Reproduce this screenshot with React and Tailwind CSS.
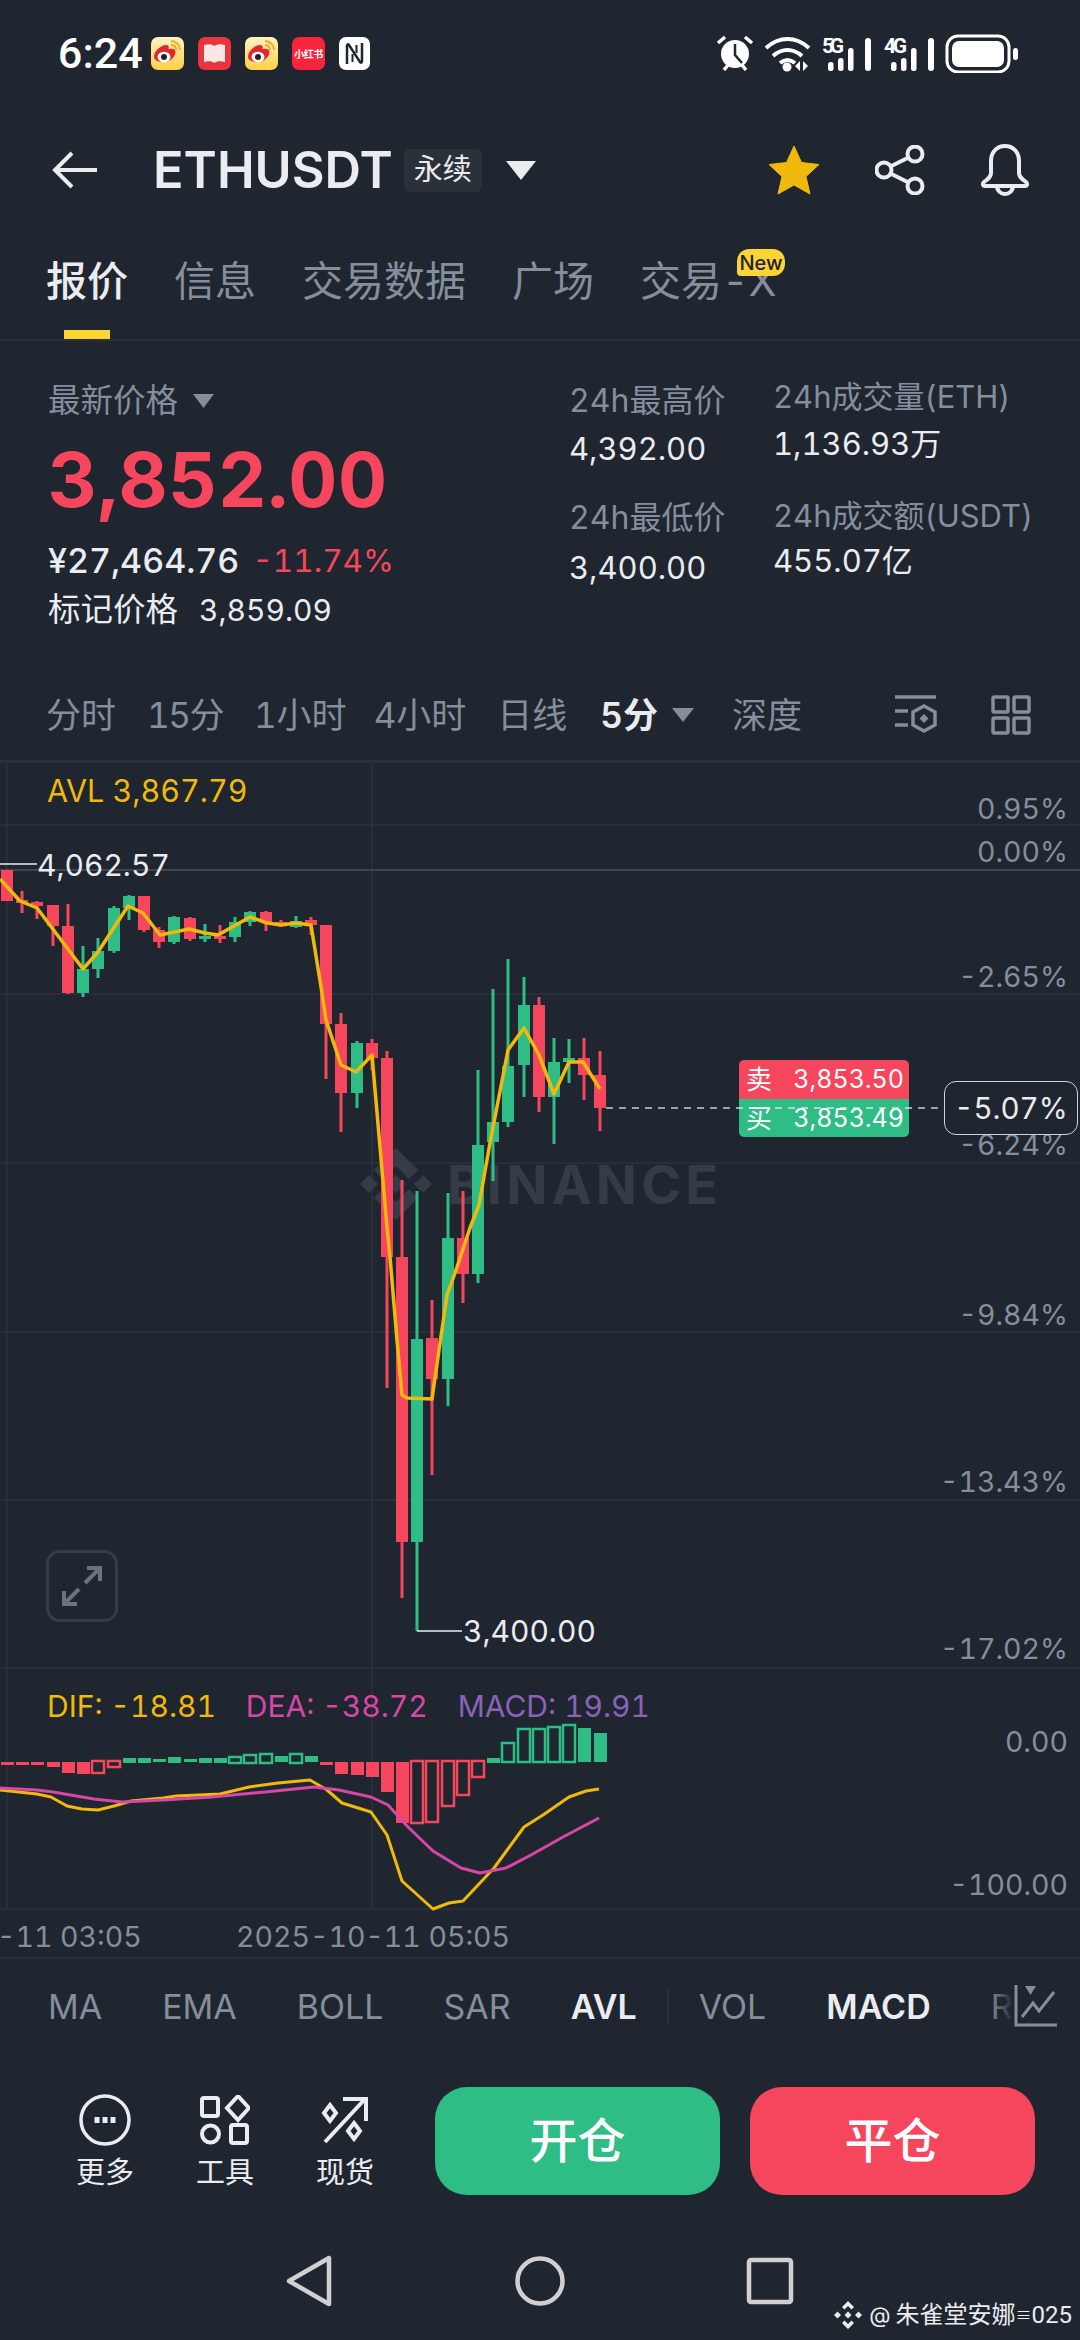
import React from "react";

const RED = "#f6465d";
const GREEN = "#2ebd85";

// x, high, body top, body bottom, low, up?
const candles = [
  [7, 870, 870, 901, 901, 0],
  [22, 891, 900, 903, 913, 0],
  [37, 901, 902, 906, 919, 0],
  [53, 905, 905, 926, 946, 0],
  [68, 904, 926, 993, 994, 0],
  [83, 946, 969, 993, 997, 1],
  [98, 938, 951, 969, 978, 1],
  [114, 906, 908, 951, 953, 1],
  [129, 895, 896, 908, 920, 1],
  [144, 896, 896, 930, 932, 0],
  [159, 927, 930, 942, 948, 0],
  [174, 916, 917, 942, 944, 1],
  [190, 917, 918, 939, 941, 0],
  [205, 924, 936, 939, 942, 1],
  [220, 925, 936, 939, 943, 0],
  [235, 917, 922, 937, 942, 1],
  [250, 911, 912, 922, 926, 1],
  [266, 911, 912, 922, 931, 0],
  [281, 920, 922, 926, 927, 0],
  [296, 916, 921, 927, 928, 1],
  [311, 917, 920, 925, 935, 0],
  [326, 925, 925, 1024, 1079, 0],
  [341, 1013, 1024, 1093, 1132, 0],
  [357, 1041, 1043, 1093, 1108, 1],
  [372, 1039, 1043, 1058, 1070, 0],
  [387, 1051, 1058, 1257, 1388, 0],
  [402, 1180, 1257, 1542, 1598, 0],
  [417, 1191, 1339, 1542, 1631, 1],
  [432, 1300, 1338, 1379, 1475, 0],
  [448, 1193, 1238, 1379, 1406, 1],
  [463, 1191, 1238, 1274, 1303, 0],
  [478, 1070, 1145, 1274, 1283, 1],
  [493, 989, 1122, 1142, 1181, 1],
  [508, 959, 1066, 1122, 1127, 1],
  [524, 977, 1005, 1065, 1097, 1],
  [539, 997, 1005, 1097, 1112, 0],
  [554, 1038, 1062, 1097, 1144, 1],
  [569, 1039, 1058, 1062, 1083, 1],
  [584, 1038, 1058, 1075, 1100, 0],
  [600, 1051, 1075, 1108, 1131, 0],
];

// x, top, bottom, up?, hollow?
const bars = [
  [7, 1762, 1765, 0, 0], [22, 1762, 1765, 0, 0], [37, 1762, 1765, 0, 0], [53, 1762, 1767, 0, 0],
  [68, 1762, 1773, 0, 0], [83, 1762, 1774, 0, 0], [98, 1761, 1773, 0, 1], [114, 1761, 1767, 0, 1],
  [129, 1758, 1763, 1, 0], [144, 1758, 1763, 1, 0], [159, 1759, 1762, 1, 0], [174, 1757, 1763, 1, 0],
  [190, 1759, 1762, 1, 0], [205, 1758, 1763, 1, 0], [220, 1758, 1763, 1, 0], [235, 1757, 1763, 1, 1],
  [250, 1755, 1763, 1, 1], [266, 1754, 1763, 1, 1], [281, 1756, 1762, 1, 0], [296, 1754, 1763, 1, 1],
  [311, 1756, 1762, 1, 0], [326, 1762, 1765, 0, 0], [341, 1762, 1774, 0, 0], [357, 1762, 1775, 0, 0],
  [372, 1762, 1777, 0, 0], [387, 1762, 1792, 0, 0], [402, 1762, 1823, 0, 0], [417, 1761, 1823, 0, 1],
  [432, 1761, 1822, 0, 1], [448, 1761, 1806, 0, 1], [463, 1761, 1795, 0, 1], [478, 1761, 1777, 0, 1],
  [493, 1758, 1763, 1, 0], [508, 1743, 1762, 1, 1], [524, 1729, 1762, 1, 1], [539, 1729, 1762, 1, 1],
  [554, 1727, 1762, 1, 1], [569, 1725, 1762, 1, 1], [584, 1728, 1762, 1, 0], [600, 1733, 1762, 1, 0],
];

const avl =
  "0,879 20,901 37,908 83,969 98,952 128,906 143,913 160,935 189,929 205,933 218,935 250,917 267,923 281,925 296,923 311,925 322,993 326,1020 341,1065 356,1072 372,1055 380,1147 387,1227 390,1257 397,1340 402,1395 407,1398 432,1399 438,1357 447,1295 455,1273 470,1228 479,1205 490,1143 508,1050 524,1028 539,1055 554,1094 569,1062 583,1062 600,1089";
const dif =
  "0,1790 37,1794 51,1797 67,1806 82,1809 98,1810 114,1806 131,1801 163,1798 176,1796 220,1794 249,1787 278,1783 310,1780 327,1790 342,1803 371,1812 387,1835 402,1881 433,1909 449,1903 463,1901 494,1868 524,1827 543,1815 569,1797 586,1791 599,1789";
const dea =
  "0,1788 37,1790 53,1792 94,1799 122,1802 163,1800 212,1797 265,1792 314,1787 339,1790 371,1797 388,1805 408,1827 433,1851 461,1868 480,1873 506,1868 531,1855 563,1837 599,1818";

function WeiboIcon() {
  return (
    <svg width="33" height="33" viewBox="0 0 33 33">
      <defs>
        <linearGradient id="wb" x1="0" y1="0" x2="0" y2="1">
          <stop offset="0" stopColor="#fff3c4" />
          <stop offset="1" stopColor="#fdd043" />
        </linearGradient>
      </defs>
      <rect width="33" height="33" rx="7" fill="url(#wb)" />
      <path d="M3 20c0-6 7-12 12-12 3 0 3 2 2.500 4 4-1 7 0 7 3 0 5-6 10-12 10-5 0-9.500-2-9.500-5z" fill="#e6262e" />
      <ellipse cx="13" cy="20" rx="6.500" ry="5.200" fill="#fff" />
      <circle cx="13" cy="20" r="3" fill="#222" />
      <path d="M20 4c5 0 9 4 9 9M20 8c3 0 5 2 5 5" stroke="#f5a623" strokeWidth="2" fill="none" />
    </svg>
  );
}

function StatusBar() {
  return (
    <div className="flex h-[106px] items-center pl-[58px] pr-[62px]">
      <span className="w-[93px] font-['Roboto',sans-serif] text-[43px] leading-none font-medium text-white">6:24</span>
      <div className="flex items-center gap-[14px]">
        <WeiboIcon />
        <svg width="33" height="33" viewBox="0 0 33 33">
          <rect width="33" height="33" rx="7" fill="#e8343c" />
          <path d="M6 8c4-1 8-1 10.500 1 2.500-2 6.500-2 10.500-1v17c-4-1-8-1-10.500 1-2.500-2-6.500-2-10.500-1z" fill="#fde6e6" />
        </svg>
        <WeiboIcon />
        <div className="flex h-[33px] w-[33px] items-center justify-center rounded-[7px] bg-[#f8233c] font-['Noto_Sans_CJK_SC',sans-serif] text-[10px] font-bold tracking-[-0.5px] whitespace-nowrap text-white">
          小红书
        </div>
        <svg width="31" height="33" viewBox="0 0 31 33">
          <rect width="31" height="33" rx="7" fill="#fff" />
          <path d="M8 27V9c0-2 1-2 2-1l11 17c1 1 2 1 2-1V6" stroke="#1f2630" strokeWidth="2.500" fill="none" />
          <path d="M13.500 25V17M17.500 8v8" stroke="#1f2630" strokeWidth="2" fill="none" />
        </svg>
      </div>
      <div className="ml-auto flex items-center">
        <svg width="302" height="40" viewBox="716 33 302 40">
          <circle cx="735" cy="54" r="14" fill="#fff" />
          <path d="M735 44v11l7 8" stroke="#1f2630" strokeWidth="2.500" fill="none" />
          <path d="M718 43l7-6M752 43l-7-6M724 70l4-5M746 70l-4-5" stroke="#fff" strokeWidth="3.500" fill="none" />
          <path d="M766 48c13-12 30-12 43 0M773 56c9-8 20-8 29 0M780 63c5-4 10-4 15 0" stroke="#fff" strokeWidth="4" fill="none" />
          <circle cx="787" cy="67" r="4.500" fill="#fff" />
          <path d="M800 61v10l-5-5zM803 61v10l5-5z" fill="#fff" />
          <text x="822" y="53" fill="#fff" fontSize="21" fontWeight="700" fontFamily="Roboto, sans-serif" textLength="22">5G</text>
          <text x="884" y="53" fill="#fff" fontSize="21" fontWeight="700" fontFamily="Roboto, sans-serif" textLength="23">4G</text>
          {[
            [828, 838, 848, 865],
            [891, 901, 911, 928],
          ].map(([a, b, c, d]) => (
            <g key={a} fill="#fff">
              <rect x={a} y="62" width="5.500" height="9" rx="2.500" />
              <rect x={b} y="58" width="5.500" height="13" rx="2.500" />
              <rect x={c} y="48" width="5.500" height="23" rx="2.500" />
              <rect x={d} y="38" width="6" height="33" rx="3" />
            </g>
          ))}
          <rect x="947" y="36" width="62" height="36" rx="11" fill="none" stroke="#fff" strokeWidth="3" />
          <rect x="952" y="41" width="52" height="26" rx="7" fill="#fff" />
          <rect x="1013" y="48" width="5" height="12" rx="2.500" fill="#fff" />
        </svg>
      </div>
    </div>
  );
}

function Header() {
  return (
    <div className="flex h-[128px] items-center pr-[50px] pl-[52px]">
      <svg width="46" height="38" viewBox="0 0 46 38" fill="none" stroke="#eaecef" strokeWidth="4">
        <path d="M45 19H4M20 2L3 19l17 17" />
      </svg>
      <span className="ml-[55px] text-[50.500px] leading-none font-semibold text-[#eaecef]">ETHUSDT</span>
      <span className="ml-[11px] flex h-[43px] w-[78px] items-center justify-center rounded-[6px] bg-[#2b3139] text-[29px] text-[#eaecef]">永续</span>
      <svg className="ml-[24px]" width="30" height="19" viewBox="0 0 30 19">
        <path d="M0 0h30L15 19z" fill="#eaecef" />
      </svg>
      <svg className="ml-auto" width="52" height="50" viewBox="0 0 52 50">
        <path d="M26 1l7.500 16.500 17.500 2-13 12 4 17.500-16-9-16 9 4-17.500-13-12 17.500-2z" fill="#f0b90b" stroke="#f0b90b" strokeWidth="1" strokeLinejoin="round" />
      </svg>
      <svg className="ml-[55px]" width="50" height="50" viewBox="0 0 50 50" fill="none" stroke="#eaecef" strokeWidth="4">
        <circle cx="40" cy="9" r="7.500" />
        <circle cx="40" cy="41" r="7.500" />
        <circle cx="9" cy="25" r="7.500" />
        <path d="M15.500 21.500L33.500 12.500M15.500 28.500L33.500 37.500" />
      </svg>
      <svg className="ml-[55px]" width="50" height="52" viewBox="0 0 50 52" fill="none" stroke="#eaecef" strokeWidth="4">
        <path d="M25 2c-9 0-14 7-14 15v12c0 4-3 6-7 9-2 2-1 4 1 4h40c2 0 3-2 1-4-4-3-7-5-7-9V17c0-8-5-15-14-15z" />
        <path d="M17 42c0 5 4 8 8 8s8-3 8-8" />
      </svg>
    </div>
  );
}

function Tabs() {
  return (
    <div className="relative flex h-[107px] gap-[46px] border-b-2 border-[#2b3139] pt-[26px] pl-[46px] text-[41px] leading-[42px] text-[#848e9c]">
      <span className="font-medium text-[#eaecef]">报价</span>
      <span>信息</span>
      <span>交易数据</span>
      <span>广场</span>
      <span>交易-X</span>
      <span className="absolute top-[15px] left-[737px] flex h-[27px] w-[48px] items-center justify-center rounded-[12px] rounded-bl-[4px] bg-[#fcd535] text-[20px] font-medium text-[#1e2329]">New</span>
      <span className="absolute top-[96px] left-[64px] h-[9px] w-[46px] bg-[#fcd535]" />
    </div>
  );
}

function Stats() {
  return (
    <div className="flex h-[335px]">
      <div className="w-[569px] pt-[40px] pl-[48px]">
        <div className="flex h-[40px] items-center text-[32.500px] text-[#848e9c]">
          最新价格
          <svg className="ml-[15px]" width="21" height="14" viewBox="0 0 21 14">
            <path d="M0 0h21L10.500 14z" fill="#848e9c" />
          </svg>
        </div>
        <div className="mt-[18px] h-[80px] text-[76px] leading-[80px] font-bold tracking-[0.5px] text-[#f6465d]">3,852.00</div>
        <div className="mt-[22px] flex h-[40px] items-center text-[34px] leading-[40px] font-medium whitespace-nowrap text-[#eaecef]">
          ¥27,464.76
          <span className="ml-[13px] text-[31.500px] font-normal text-[#f6465d]">-11.74%</span>
        </div>
        <div className="mt-[9px] flex h-[40px] items-center text-[32.500px] text-[#eaecef]">
          标记价格
          <span className="ml-[21px] text-[30px]">3,859.09</span>
        </div>
      </div>
      <div className="w-[204px] pt-[40px] text-[32px] text-[#848e9c]">
        <div className="h-[40px] leading-[40px] whitespace-nowrap">24h最高价</div>
        <div className="mt-[10px] h-[36px] text-[31px] leading-[36px] text-[#eaecef]">4,392.00</div>
        <div className="mt-[31px] h-[40px] leading-[40px] whitespace-nowrap">24h最低价</div>
        <div className="mt-[12px] h-[36px] text-[31px] leading-[36px] text-[#eaecef]">3,400.00</div>
      </div>
      <div className="pt-[36px] text-[31px] text-[#848e9c]">
        <div className="h-[40px] leading-[40px] whitespace-nowrap">24h成交量(ETH)</div>
        <div className="mt-[9px] h-[36px] text-[31px] leading-[36px] text-[#eaecef]">1,136.93万</div>
        <div className="mt-[34px] h-[40px] leading-[40px] whitespace-nowrap">24h成交额(USDT)</div>
        <div className="mt-[7px] h-[36px] text-[31px] leading-[36px] text-[#eaecef]">455.07亿</div>
      </div>
    </div>
  );
}

function Periods() {
  return (
    <div className="flex h-[84px] items-center gap-[31px] pr-[49px] pb-[6px] pl-[46px] text-[35px] whitespace-nowrap text-[#848e9c]">
      <span>分时</span>
      <span className="tracking-[-1.500px]">15分</span>
      <span>1小时</span>
      <span className="-ml-[4px]">4小时</span>
      <span>日线</span>
      <span className="ml-[2px] flex items-center font-semibold text-[#eaecef]">
        5分
        <svg className="ml-[14px]" width="22" height="14" viewBox="0 0 22 14">
          <path d="M0 0h22L11 14z" fill="#848e9c" />
        </svg>
      </span>
      <span className="ml-[7px]">深度</span>
      <svg className="ml-auto" width="42" height="40" viewBox="0 0 42 40" fill="none" stroke="#848e9c" strokeWidth="3.500">
        <path d="M0 2h41M0 16h13M0 30h13" />
        <path d="M29 11l11 6v13l-11 6-11-6V17z" />
        <path d="M29 19l4.500 4.500-4.500 4.500-4.500-4.500z" fill="#848e9c" stroke="none" />
      </svg>
      <svg className="ml-[23px]" width="40" height="40" viewBox="0 0 40 40" fill="none" stroke="#848e9c" strokeWidth="3.500">
        <rect x="2" y="2" width="15" height="15" rx="1.500" />
        <rect x="23" y="2" width="15" height="15" rx="1.500" />
        <rect x="2" y="23" width="15" height="15" rx="1.500" />
        <rect x="23" y="23" width="15" height="15" rx="1.500" />
      </svg>
    </div>
  );
}

function ChartDrawing() {
  return (
    <svg className="absolute inset-0" width="1080" height="1194" viewBox="0 763 1080 1194">
      <g stroke="#2d333d" strokeWidth="1.500">
        <path d="M7 763V1909M372 763V1909" />
        <path d="M0 825H1080M0 994H1080M0 1163H1080M0 1332H1080M0 1500H1080M0 1668H1080M0 1909H1080" />
      </g>
      <path d="M0 870H1080" stroke="#4b515b" strokeWidth="1.500" />
      <g fill="#363c47">
        <path d="M396 1148l22 22-9 9-13-13-13 13-9-9zM396 1220l22-22-9-9-13 13-13-13-9 9z" />
        <path d="M360 1184l9-9 9 9-9 9zM414 1184l9-9 9 9-9 9zM387 1184l9-9 9 9-9 9z" />
      </g>
      <text x="447" y="1204" fill="#363c47" fontSize="54" fontWeight="700" fontFamily="Inter, sans-serif" textLength="271">BINANCE</text>
      {candles.map(([x, h, t, b, l, up]) => (
        <g key={x} fill={up ? GREEN : RED}>
          <rect x={x - 1.5} y={h} width="3" height={l - h} />
          <rect x={x - 6} y={t} width="12" height={b - t} />
        </g>
      ))}
      <polyline points={avl} fill="none" stroke="#f0b90b" strokeWidth="3.500" strokeLinejoin="round" />
      <path d="M0 864H37M417 1631H462" stroke="#eaecef" strokeWidth="1.500" fill="none" />
      {bars.map(([x, t, b, up, hollow]) =>
        hollow ? (
          <rect key={x} x={x - 6} y={t} width="12" height={b - t} fill="none" stroke={up ? GREEN : RED} strokeWidth="2.500" />
        ) : (
          <rect key={x} x={x - 6} y={t} width="13" height={b - t} fill={up ? GREEN : RED} />
        ),
      )}
      <polyline points={dif} fill="none" stroke="#f0b90b" strokeWidth="3" strokeLinejoin="round" />
      <polyline points={dea} fill="none" stroke="#d846a6" strokeWidth="3" strokeLinejoin="round" />
    </svg>
  );
}

function Chart() {
  return (
    <div className="relative h-[1194px] bg-[#1f2630] text-[28.500px] leading-[36px]">
      <ChartDrawing />
      <span className="absolute top-[10px] left-[47px] text-[30.500px] text-[#f0b90b]">AVL 3,867.79</span>
      <span className="absolute top-[84px] left-[37px] text-[30px] text-[#eaecef]">4,062.57</span>
      <span className="absolute top-[850px] left-[463px] text-[30px] text-[#eaecef]">3,400.00</span>

      <span className="absolute top-[28px] right-[12px] text-[#848e9c]">0.95%</span>
      <span className="absolute top-[71px] right-[12px] text-[#848e9c]">0.00%</span>
      <span className="absolute top-[196px] right-[12px] text-[#848e9c]">-2.65%</span>
      <span className="absolute top-[364px] right-[12px] text-[#848e9c]">-6.24%</span>
      <span className="absolute top-[534px] right-[12px] text-[#848e9c]">-9.84%</span>
      <span className="absolute top-[701px] right-[12px] text-[#848e9c]">-13.43%</span>
      <span className="absolute top-[868px] right-[12px] text-[#848e9c]">-17.02%</span>
      <span className="absolute top-[961px] right-[12px] text-[#848e9c]">0.00</span>
      <span className="absolute top-[1104px] right-[12px] text-[#848e9c]">-100.00</span>

      <div className="absolute top-[318px] left-[944px] flex h-[54px] w-[134px] items-center justify-center rounded-[12px] border-[1.5px] border-[#cfd2d6] bg-[#1f2630] text-[29.500px] text-[#eaecef]">-5.07%</div>

      <div className="absolute top-[297px] left-[739px] w-[170px] overflow-hidden rounded-[5px] text-[26px] leading-[39px] text-white">
        <div className="flex h-[39px] justify-between bg-[#f6465d] pr-[5px] pl-[7px]">
          <span>卖</span>
          <span className="text-[25px]">3,853.50</span>
        </div>
        <div className="flex h-[38px] justify-between bg-[#2ebd85] pr-[5px] pl-[7px]">
          <span>买</span>
          <span className="text-[25px]">3,853.49</span>
        </div>
      </div>
      <svg className="absolute top-[344px] left-[606px]" width="338" height="2" viewBox="0 0 338 2">
        <path d="M0 1H338" stroke="#eaecef" strokeWidth="1.500" strokeDasharray="7 6" opacity="0.85" />
      </svg>

      <div className="absolute top-[787px] left-[46px] flex h-[72px] w-[72px] items-center justify-center rounded-[14px] border-[3px] border-[#363c47]">
        <svg width="44" height="44" viewBox="0 0 44 44" fill="none" stroke="#6b7280" strokeWidth="4">
          <path d="M25 19L40 4M27 4h13v13M19 25L4 40M4 27v13h13" />
        </svg>
      </div>

      <div className="absolute top-[925px] left-[47px] flex gap-[30px] text-[30px] whitespace-nowrap">
        <span className="text-[#f0b90b]">DIF: -18.81</span>
        <span className="text-[#d846a6]">DEA: -38.72</span>
        <span className="text-[#8a63b8]">MACD: 19.91</span>
      </div>
      <span className="absolute top-[1156px] -left-[3px] text-[#848e9c]">-11 03:05</span>
      <span className="absolute top-[1156px] left-[236px] text-[#848e9c]">2025-10-11 05:05</span>
    </div>
  );
}

function Indicators() {
  return (
    <div className="relative flex h-[100px] items-center overflow-hidden border-t-2 border-[#2b3139] pb-[4px] pl-[48px] text-[34px] whitespace-nowrap text-[#848e9c]">
      <span>MA</span>
      <span className="ml-[60px]">EMA</span>
      <span className="ml-[60px]">BOLL</span>
      <span className="ml-[60px]">SAR</span>
      <span className="ml-[60px] font-semibold text-[#eaecef]">AVL</span>
      <span className="ml-[30px] h-[35px] w-[2px] bg-[#2b3139]" />
      <span className="ml-[30px]">VOL</span>
      <span className="ml-[60px] font-semibold text-[#eaecef]">MACD</span>
      <span className="ml-[60px]">RSI</span>
      <div className="absolute top-0 right-[66px] h-full w-[24px] bg-linear-to-r from-transparent to-[#1f2630]" />
      <div className="absolute top-0 right-0 flex h-full w-[66px] items-center bg-[#1f2630] pb-[4px]">
        <svg width="44" height="44" viewBox="0 0 44 44" fill="none" stroke="#848e9c" strokeWidth="3">
          <path d="M2 1V41H43" />
          <path d="M8 33L19 19l6 8 15-19" />
          <path d="M11 2h11l-5.500 9z" fill="#848e9c" stroke="none" />
        </svg>
      </div>
    </div>
  );
}

function ActionItem({ label, children }) {
  return (
    <div className="flex w-[120px] flex-col items-center">
      <div className="flex h-[52px] items-center justify-center">{children}</div>
      <span className="mt-[10px] text-[29px] leading-[34px] text-[#eaecef]">{label}</span>
    </div>
  );
}

function Actions() {
  return (
    <div className="flex h-[108px] items-start pl-[45px]">
      <div className="mt-[7px] flex">
        <ActionItem label="更多">
          <svg width="52" height="52" viewBox="0 0 52 52" fill="none" stroke="#eaecef" strokeWidth="3.500">
            <circle cx="26" cy="26" r="24" />
            <path d="M15.500 23h5v6h-5zM23.500 23h5v6h-5zM31.500 23h5v6h-5z" fill="#eaecef" stroke="none" />
          </svg>
        </ActionItem>
        <ActionItem label="工具">
          <svg width="50" height="50" viewBox="0 0 50 50" fill="none" stroke="#eaecef" strokeWidth="4">
            <rect x="2" y="3" width="16" height="18" rx="2" />
            <path d="M38 1l11 12-11 12-11-12z" />
            <circle cx="10.500" cy="39" r="8.500" />
            <rect x="31" y="30" width="16" height="18" rx="2" />
          </svg>
        </ActionItem>
        <ActionItem label="现货">
          <svg width="48" height="48" viewBox="0 0 48 48" fill="none" stroke="#eaecef" strokeWidth="4">
            <path d="M4 46L44 3M22 3h23v22" />
            <path d="M9 9l6 8-6 8-6-8zM33 27l6 8-6 8-6-8z" />
          </svg>
        </ActionItem>
      </div>
      <button className="ml-[30px] h-[108px] w-[285px] rounded-[32px] bg-[#2ebd85] text-[48px] font-medium text-white">开仓</button>
      <button className="ml-[30px] h-[108px] w-[285px] rounded-[32px] bg-[#f6465d] text-[48px] font-medium text-white">平仓</button>
    </div>
  );
}

function NavBar() {
  return (
    <div className="mt-[60px] flex justify-center gap-[170px]">
      <svg width="60" height="52" viewBox="0 0 60 52" fill="none" stroke="#d0d0d0" strokeWidth="4.500" strokeLinejoin="round">
        <path d="M49 3v46L9 26z" />
      </svg>
      <svg width="60" height="52" viewBox="0 0 60 52" fill="none" stroke="#d0d0d0" strokeWidth="4.500">
        <circle cx="30" cy="26" r="22.500" />
      </svg>
      <svg width="60" height="52" viewBox="0 0 60 52" fill="none" stroke="#d0d0d0" strokeWidth="4.500" strokeLinejoin="round">
        <rect x="9" y="5" width="42" height="42" rx="2" />
      </svg>
    </div>
  );
}

export default function App() {
  return (
    <div className="relative h-[2340px] w-[1080px] overflow-hidden bg-[#1f2630] font-['Inter','Noto_Sans_CJK_SC',sans-serif] tabular-nums">
      <StatusBar />
      <Header />
      <Tabs />
      <Stats />
      <Periods />
      <div className="h-[3px] bg-[#2b3139]" />
      <Chart />
      <Indicators />
      <div className="mt-[30px]">
        <Actions />
      </div>
      <NavBar />
      <div className="absolute right-[8px] bottom-[10px] flex items-center text-[24px] leading-[30px] text-[#eaecef]">
        <svg width="28" height="28" viewBox="0 0 28 28" fill="#eaecef">
          <path d="M14 0l6 6-2.500 2.500L14 5l-3.500 3.500L8 6zM14 28l6-6-2.500-2.500L14 23l-3.500-3.500L8 22zM0 14l3.500-3.500L7 14l-3.500 3.500zM21 14l3.500-3.500L28 14l-3.500 3.500zM10.500 14l3.500-3.500 3.500 3.500-3.500 3.500z" />
        </svg>
        <span className="ml-[7px] text-[22px]">@</span>
        <span className="ml-[5px]">朱雀堂安娜</span>
        <span className="text-[16px]">≡</span>
        <span className="font-['Roboto',sans-serif] text-[24px]">025</span>
      </div>
    </div>
  );
}
